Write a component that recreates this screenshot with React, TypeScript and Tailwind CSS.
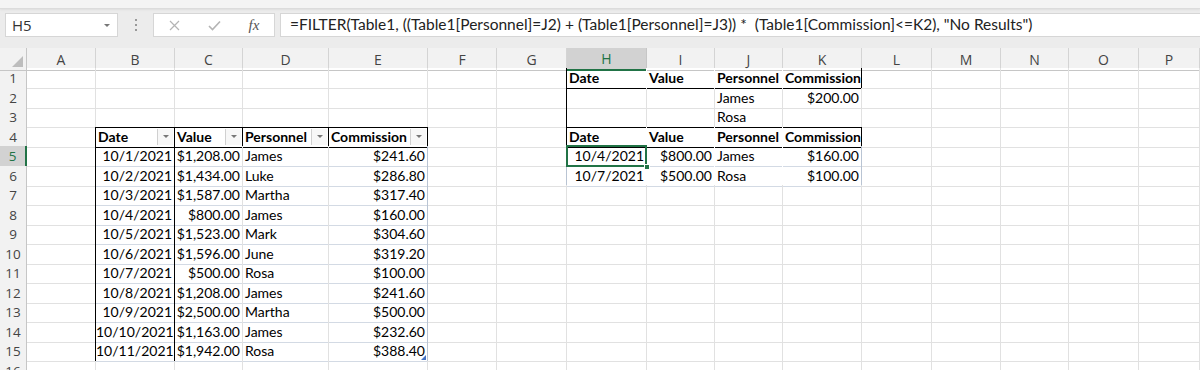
import React from 'react';

type CellData = { t: string; r?: boolean; b?: boolean; dd?: boolean };

const ROWS = 16;
const COLS = 17; // 0 = row header, 1..16 = A..P, 17 = remainder

const colLetters = ['A', 'B', 'C', 'D', 'E', 'F', 'G', 'H', 'I', 'J', 'K', 'L', 'M', 'N', 'O', 'P', ''];

const table1: [string, string, string, string][] = [
  ['10/1/2021', '$1,208.00', 'James', '$241.60'],
  ['10/2/2021', '$1,434.00', 'Luke', '$286.80'],
  ['10/3/2021', '$1,587.00', 'Martha', '$317.40'],
  ['10/4/2021', '$800.00', 'James', '$160.00'],
  ['10/5/2021', '$1,523.00', 'Mark', '$304.60'],
  ['10/6/2021', '$1,596.00', 'June', '$319.20'],
  ['10/7/2021', '$500.00', 'Rosa', '$100.00'],
  ['10/8/2021', '$1,208.00', 'James', '$241.60'],
  ['10/9/2021', '$2,500.00', 'Martha', '$500.00'],
  ['10/10/2021', '$1,163.00', 'James', '$232.60'],
  ['10/11/2021', '$1,942.00', 'Rosa', '$388.40'],
];

const cells: Record<string, CellData> = {};
const put = (r: number, c: number, d: CellData) => { cells[`${r}-${c}`] = d; };

['Date', 'Value', 'Personnel', 'Commission'].forEach((h, i) => {
  put(1, 8 + i, { t: h, b: true });
  put(4, 8 + i, { t: h, b: true });
  put(4, 2 + i, { t: h, b: true, dd: true });
});
put(2, 10, { t: 'James' });
put(2, 11, { t: '$200.00', r: true });
put(3, 10, { t: 'Rosa' });
table1.forEach((row, i) => {
  put(5 + i, 2, { t: row[0], r: true });
  put(5 + i, 3, { t: row[1], r: true });
  put(5 + i, 4, { t: row[2] });
  put(5 + i, 5, { t: row[3], r: true });
});
[['10/4/2021', '$800.00', 'James', '$160.00'], ['10/7/2021', '$500.00', 'Rosa', '$100.00']].forEach((row, i) => {
  put(5 + i, 8, { t: row[0], r: true });
  put(5 + i, 9, { t: row[1], r: true });
  put(5 + i, 10, { t: row[2] });
  put(5 + i, 11, { t: row[3], r: true });
});

const RIGHT: Record<string, string> = {
  g: 'border-r-[#e1e1e1]',
  k: 'border-r-black',
  t: 'border-r-[#b9c4d3]',
  w: 'border-r-white',
};
const BOTTOM: Record<string, string> = {
  g: 'border-b-[#e1e1e1]',
  k: 'border-b-black',
  t: 'border-b-[#d3dae4]',
  w: 'border-b-white',
};

function rightKey(r: number, c: number) {
  if ((c === 1 || c === 2) && r >= 4 && r <= 15) return 'k';
  if ((c === 3 || c === 4) && r === 4) return 'k';
  if (c === 5 && r === 4) return 'k';
  if (c === 5 && r >= 5 && r <= 15) return 't';
  if (c === 7 && r >= 1 && r <= 4) return 'k';
  if (c === 7 && (r === 5 || r === 6)) return 't';
  if (c >= 8 && c <= 10 && (r === 1 || r === 4 || r === 5 || r === 6)) return 'w';
  if (c === 11 && (r === 1 || r === 4)) return 'k';
  if (c === 11 && (r === 5 || r === 6)) return 't';
  return 'g';
}

function bottomKey(r: number, c: number) {
  if (c >= 2 && c <= 5) {
    if (r === 3 || r === 4) return 'k';
    if (r >= 5 && r <= 15) return 't';
  }
  if (c >= 8 && c <= 11) {
    if (r === 1 || r === 3 || r === 4) return 'k';
    if (r === 5 || r === 6) return 't';
  }
  return 'g';
}

function DropDown() {
  return (
    <span className="ml-auto mr-[1px] w-[16px] h-[16px] shrink-0 border-l border-[#d0d0d0] bg-[#f7f7f7] flex items-center justify-center">
      <span className="w-0 h-0 border-l-[3px] border-r-[3px] border-t-[3px] border-l-transparent border-r-transparent border-t-[#777]" />
    </span>
  );
}

function Cell({ r, c }: { r: number; c: number }) {
  const d = cells[`${r}-${c}`];
  const cls = `relative h-full border-r border-b ${RIGHT[rightKey(r, c)]} ${BOTTOM[bottomKey(r, c)]} flex items-center overflow-visible whitespace-nowrap`;
  return (
    <div className={cls}>
      {d && (
        <span className={`${d.r ? 'ml-auto pr-[2px]' : 'pl-[2px]'} ${d.b ? 'font-bold' : ''} leading-none`}>{d.t}</span>
      )}
      {d?.dd && <DropDown />}
      {r === 5 && c === 8 && (
        <>
          <div className="absolute z-10 -left-[1px] -top-[1px] right-[-1px] bottom-[-1px] border-2 border-[#217346] pointer-events-none" />
          <div className="absolute z-20 right-[-4px] bottom-[-4px] w-[6px] h-[6px] bg-[#217346] border border-white" />
        </>
      )}
      {r === 15 && c === 5 && (
        <svg className="absolute z-10 right-[1px] bottom-[1px]" width="5" height="5" viewBox="0 0 5 5">
          <polygon points="5,0 5,5 0,5" fill="#4472c4" />
        </svg>
      )}
    </div>
  );
}

const gridCols = 'grid grid-cols-[27px_69px_79px_68px_86px_99px_69px_70px_80px_68px_68px_79px_70px_69px_68px_70px_1fr]';

export default function App() {
  return (
    <div className="w-[1200px] h-[370px] overflow-hidden bg-white font-['Lato',sans-serif] text-[14px] text-black">
      {/* formula bar */}
      <div className="h-[48px] bg-[#ececec] font-['Open_Sans',sans-serif]">
        <div className="h-[9px] bg-[#f4f4f4] border-b border-[#dcdcdc] shadow-[0_1px_2px_rgba(0,0,0,0.06)]" />
        <div className="flex items-center pt-[4px] pl-[5px]">
          <div className="w-[113px] h-[24px] bg-white border border-[#d6d6d6] flex items-center pl-[6px] pr-[7px] text-[15px] text-[#333]">
            H5
            <span className="ml-auto w-0 h-0 border-l-[3px] border-r-[3px] border-t-[3px] border-l-transparent border-r-transparent border-t-[#777]" />
          </div>
          <div className="w-[35px] flex flex-col items-center gap-[3px]">
            <span className="w-[2px] h-[2px] bg-[#999]" />
            <span className="w-[2px] h-[2px] bg-[#999]" />
            <span className="w-[2px] h-[2px] bg-[#999]" />
          </div>
          <div className="w-[122px] h-[24px] bg-white border border-[#d6d6d6] flex items-center">
            <span className="w-[40px] flex justify-center">
              <svg width="11" height="11" viewBox="0 0 11 11" stroke="#b4b4b4" strokeWidth="1.2" fill="none">
                <path d="M1 1 L10 10 M10 1 L1 10" />
              </svg>
            </span>
            <span className="w-[40px] flex justify-center">
              <svg width="13" height="11" viewBox="0 0 13 11" stroke="#b4b4b4" strokeWidth="1.6" fill="none">
                <path d="M1 6 L4.5 9.5 L12 1.5" />
              </svg>
            </span>
            <span className="w-[40px] flex justify-center font-['Liberation_Serif',serif] italic text-[15px] text-[#555]">
              fx
            </span>
          </div>
          <div className="ml-[5px] flex-1 h-[24px] bg-white border border-[#d6d6d6] border-r-0 flex items-center pl-[9px] text-[15.5px] text-[#222] font-['Lato',sans-serif] whitespace-pre">
            {'=FILTER(Table1, ((Table1[Personnel]=J2) + (Table1[Personnel]=J3)) *  (Table1[Commission]<=K2), "No Results")'}
          </div>
        </div>
      </div>

      {/* column headers */}
      <div className={`${gridCols} h-[20px] bg-[#f2f2f2] font-['Open_Sans',sans-serif] text-[14px] text-[#444]`}>
        <div className="border-r border-b border-[#c6c6c6] relative">
          <svg className="absolute right-[3px] bottom-[3px]" width="11" height="11" viewBox="0 0 11 11">
            <polygon points="11,0 11,11 0,11" fill="#bdbdbd" />
          </svg>
        </div>
        {colLetters.map((l, i) =>
          i === 7 ? (
            <div key={i} className="bg-[#d2d2d2] border-r border-r-[#c6c6c6] border-b-2 border-b-[#217346] flex items-center justify-center text-[#217346]">
              {l}
            </div>
          ) : (
            <div key={i} className="border-r border-r-[#d4d4d4] border-b border-b-[#c6c6c6] flex items-center justify-center">
              {l}
            </div>
          )
        )}
      </div>

      {/* rows */}
      {Array.from({ length: ROWS }, (_, ri) => {
        const r = ri + 1;
        return (
          <div key={r} className={`${gridCols} h-[19.5px]`}>
            <div
              className={
                r === 5
                  ? "bg-[#d2d2d2] border-r-2 border-r-[#217346] border-b border-b-[#c6c6c6] flex items-center justify-center font-['Open_Sans',sans-serif] text-[13.5px] text-[#217346]"
                  : "bg-[#f2f2f2] border-r border-r-[#c6c6c6] border-b border-b-[#dcdcdc] flex items-center justify-center font-['Open_Sans',sans-serif] text-[13.5px] text-[#444]"
              }
            >
              {r}
            </div>
            {Array.from({ length: COLS - 1 }, (_, ci) => (
              <Cell key={ci} r={r} c={ci + 1} />
            ))}
          </div>
        );
      })}
    </div>
  );
}
